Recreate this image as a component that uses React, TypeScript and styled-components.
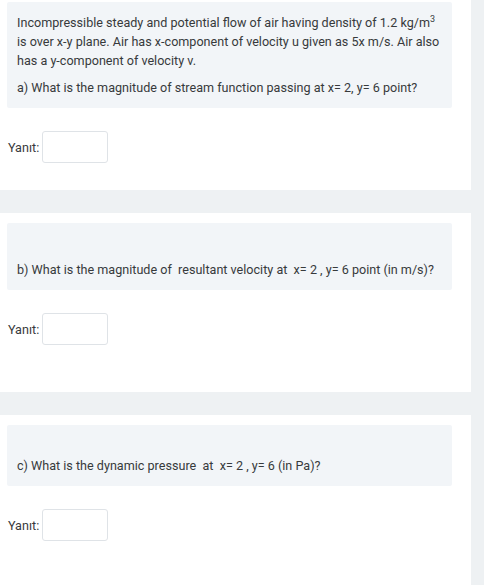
import { createGlobalStyle, styled } from "styled-components";

const Global = createGlobalStyle`
  html, body {
    margin: 0;
    padding: 0;
    background: #eef1f3;
  }
  body {
    font-family: Roboto, "Noto Sans", "Liberation Sans", sans-serif;
    font-size: 12.6px;
    color: #373a3c;
  }
`;

const Page = styled.div`
  display: flex;
  flex-direction: column;
  gap: 23px;
  padding-right: 13px;
`;

const Card = styled.section<{ $top: number; $bottom: number }>`
  background: #fff;
  padding: ${(p) => p.$top}px 19px ${(p) => p.$bottom}px 7px;
  display: flex;
  flex-direction: column;
  gap: 23px;
`;

const Formulation = styled.div`
  background: #f2f5f8;
  border-radius: 2px;
  padding: 11px 10px 11px 10px;
  line-height: 19px;
`;

const Para = styled.p`
  margin: 0 0 8px;
  &:last-child {
    margin-bottom: 0;
  }
`;

const Sup = styled.sup`
  font-size: 9px;
  line-height: 0;
  vertical-align: 5px;
`;

const Blank = styled.div<{ $h: number }>`
  height: ${(p) => p.$h}px;
`;

const AnswerRow = styled.div`
  display: flex;
  align-items: center;
  gap: 3px;
  padding-left: 1px;
`;

const Label = styled.label`
  font-size: 12.6px;
  color: #373a3c;
`;

const Input = styled.input`
  width: 66px;
  height: 32px;
  box-sizing: border-box;
  border: 1px solid #dfe3e7;
  border-radius: 3px;
  background: #fff;
  padding: 0 6px;
  font: inherit;
`;

function Answer() {
  return (
    <AnswerRow>
      <Label>Yanıt:</Label>
      <Input type="text" />
    </AnswerRow>
  );
}

export default function App() {
  return (
    <>
      <Global />
      <Page>
        <Card $top={2} $bottom={27}>
          <Formulation>
            <Para>
              Incompressible steady and potential flow of air having density of 1.2 kg/m
              <Sup>3</Sup> is over x-y plane. Air has x-component of velocity u given as 5x m/s.
              Air also has a y-component of velocity v.
            </Para>
            <Para>a) What is the magnitude of stream function passing at x= 2, y= 6 point?</Para>
          </Formulation>
          <Answer />
        </Card>
        <Card $top={10} $bottom={47}>
          <Formulation>
            <Blank $h={26} />
            <Para>
              b) What is the magnitude of&nbsp; resultant velocity at&nbsp; x= 2 , y= 6 point (in m/s)?
            </Para>
          </Formulation>
          <Answer />
        </Card>
        <Card $top={10} $bottom={60}>
          <Formulation>
            <Blank $h={20} />
            <Para>c) What is the dynamic pressure&nbsp; at&nbsp; x= 2 , y= 6 (in Pa)?</Para>
          </Formulation>
          <Answer />
        </Card>
      </Page>
    </>
  );
}
